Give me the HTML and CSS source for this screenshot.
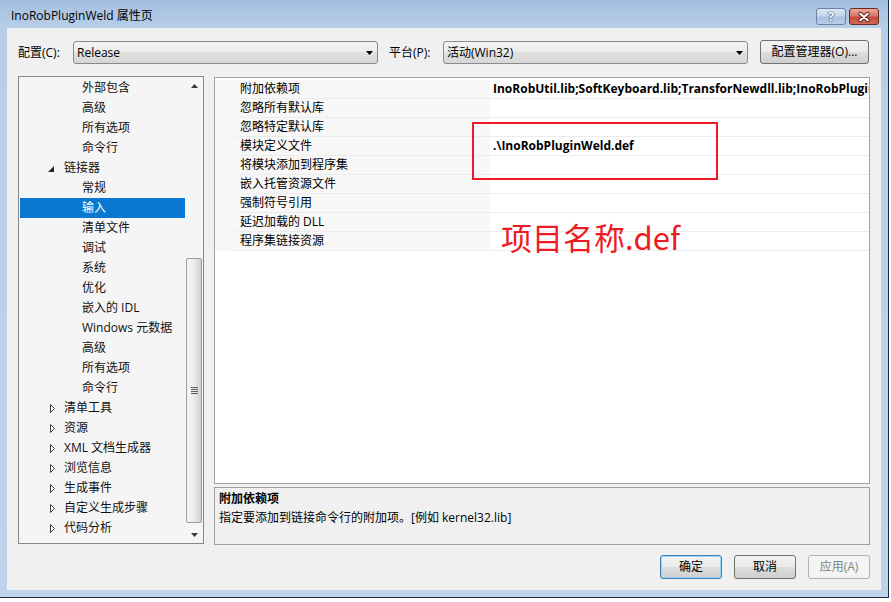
FILE: index.html
```html
<!DOCTYPE html>
<html lang="zh-CN">
<head>
<meta charset="utf-8">
<title>InoRobPluginWeld 属性页</title>
<link rel="stylesheet" href="styles.css">
</head>
<body>
<div class="window">
  <div class="titlebar">
    <span class="title">InoRobPluginWeld 属性页</span>
    <div class="caption-btns">
      <div class="cap-btn help">?</div>
      <div class="cap-btn close">
        <svg width="30" height="16" viewBox="0 0 30 16"><path d="M11 4.5 L19 11.5 M19 4.5 L11 11.5" stroke="#5a1d19" stroke-width="4.2" stroke-linecap="round"/><path d="M11 4.5 L19 11.5 M19 4.5 L11 11.5" stroke="#ffffff" stroke-width="2.2" stroke-linecap="round"/></svg>
      </div>
    </div>
  </div>
  <div class="client">
    <div class="toprow">
      <span class="lbl lbl-config">配置(C):</span>
      <div class="combo"><span>Release</span><svg class="dd" width="7" height="4" viewBox="0 0 7 4"><polygon points="0,0 7,0 3.5,4" fill="#000"/></svg></div>
      <span class="lbl lbl-platform">平台(P):</span>
      <div class="combo"><span>活动(Win32)</span><svg class="dd" width="7" height="4" viewBox="0 0 7 4"><polygon points="0,0 7,0 3.5,4" fill="#000"/></svg></div>
      <button class="btn btn-manager">配置管理器(O)...</button>
    </div>
    <div class="main">
      <div class="tree">
        <div class="tree-list">
          <div class="trow l2">外部包含</div>
          <div class="trow l2">高级</div>
          <div class="trow l2">所有选项</div>
          <div class="trow l2">命令行</div>
          <div class="trow l1"><span class="tarrow"><svg width="6" height="6" viewBox="0 0 6 6"><polygon points="6,0 6,6 0,6" fill="#262626"/></svg></span>链接器</div>
          <div class="trow l2">常规</div>
          <div class="trow l2 sel">输入</div>
          <div class="trow l2">清单文件</div>
          <div class="trow l2">调试</div>
          <div class="trow l2">系统</div>
          <div class="trow l2">优化</div>
          <div class="trow l2">嵌入的 IDL</div>
          <div class="trow l2">Windows 元数据</div>
          <div class="trow l2">高级</div>
          <div class="trow l2">所有选项</div>
          <div class="trow l2">命令行</div>
          <div class="trow l1"><span class="tarrow c"><svg width="6" height="9" viewBox="0 0 6 9"><polygon points="0.5,0.5 4.5,4.5 0.5,8.5" fill="#fff" stroke="#3c3c3c" stroke-width="1"/></svg></span>清单工具</div>
          <div class="trow l1"><span class="tarrow c"><svg width="6" height="9" viewBox="0 0 6 9"><polygon points="0.5,0.5 4.5,4.5 0.5,8.5" fill="#fff" stroke="#3c3c3c" stroke-width="1"/></svg></span>资源</div>
          <div class="trow l1"><span class="tarrow c"><svg width="6" height="9" viewBox="0 0 6 9"><polygon points="0.5,0.5 4.5,4.5 0.5,8.5" fill="#fff" stroke="#3c3c3c" stroke-width="1"/></svg></span>XML 文档生成器</div>
          <div class="trow l1"><span class="tarrow c"><svg width="6" height="9" viewBox="0 0 6 9"><polygon points="0.5,0.5 4.5,4.5 0.5,8.5" fill="#fff" stroke="#3c3c3c" stroke-width="1"/></svg></span>浏览信息</div>
          <div class="trow l1"><span class="tarrow c"><svg width="6" height="9" viewBox="0 0 6 9"><polygon points="0.5,0.5 4.5,4.5 0.5,8.5" fill="#fff" stroke="#3c3c3c" stroke-width="1"/></svg></span>生成事件</div>
          <div class="trow l1"><span class="tarrow c"><svg width="6" height="9" viewBox="0 0 6 9"><polygon points="0.5,0.5 4.5,4.5 0.5,8.5" fill="#fff" stroke="#3c3c3c" stroke-width="1"/></svg></span>自定义生成步骤</div>
          <div class="trow l1"><span class="tarrow c"><svg width="6" height="9" viewBox="0 0 6 9"><polygon points="0.5,0.5 4.5,4.5 0.5,8.5" fill="#fff" stroke="#3c3c3c" stroke-width="1"/></svg></span>代码分析</div>
        </div>
        <div class="vscroll">
          <div class="sarrow"><svg width="7" height="4" viewBox="0 0 7 4"><polygon points="0,4 3.5,0 7,4" fill="#3a3a3a"/></svg></div>
          <div class="strack">
            <div class="thumb">
              <svg width="7" height="7" viewBox="0 0 7 7"><path d="M0 0.5H7M0 2.5H7M0 4.5H7M0 6.5H7" stroke="#5e5e5e" stroke-width="1"/></svg>
            </div>
          </div>
          <div class="sarrow"><svg width="7" height="4" viewBox="0 0 7 4"><polygon points="0,0 7,0 3.5,4" fill="#3a3a3a"/></svg></div>
        </div>
      </div>
      <div class="rightcol">
        <div class="grid">
          <div class="grow"><div class="gmargin"></div><div class="gname">附加依赖项</div><div class="gval">InoRobUtil.lib;SoftKeyboard.lib;TransforNewdll.lib;InoRobPluginWeld.lib;%(AdditionalDependencies)</div></div>
          <div class="grow"><div class="gmargin"></div><div class="gname">忽略所有默认库</div><div class="gval"></div></div>
          <div class="grow"><div class="gmargin"></div><div class="gname">忽略特定默认库</div><div class="gval"></div></div>
          <div class="grow"><div class="gmargin"></div><div class="gname">模块定义文件</div><div class="gval">.\InoRobPluginWeld.def</div></div>
          <div class="grow"><div class="gmargin"></div><div class="gname">将模块添加到程序集</div><div class="gval"></div></div>
          <div class="grow"><div class="gmargin"></div><div class="gname">嵌入托管资源文件</div><div class="gval"></div></div>
          <div class="grow"><div class="gmargin"></div><div class="gname">强制符号引用</div><div class="gval"></div></div>
          <div class="grow"><div class="gmargin"></div><div class="gname">延迟加载的 DLL</div><div class="gval"></div></div>
          <div class="grow"><div class="gmargin"></div><div class="gname">程序集链接资源</div><div class="gval"></div></div>
          <div class="annot-box"></div>
          <div class="annot-text">项目名称.def</div>
        </div>
        <div class="desc">
          <div class="desc-title">附加依赖项</div>
          <div class="desc-text">指定要添加到链接命令行的附加项。[例如 kernel32.lib]</div>
        </div>
      </div>
    </div>
    <div class="btnrow">
      <button class="btn dlg default">确定</button>
      <button class="btn dlg">取消</button>
      <button class="btn dlg disabled">应用(A)</button>
    </div>
  </div>
</div>
</body>
</html>
```
FILE: styles.css
```css
* { box-sizing: border-box; }
html, body { margin: 0; padding: 0; }
body {
  width: 891px;
  height: 602px;
  overflow: hidden;
  background: #ffffff;
  font-family: "Open Sans", "Noto Sans CJK SC", sans-serif;
  font-size: 12px;
  color: #000;
}
.window {
  width: 889px;
  height: 598px;
  border-right: 1px solid #1c2b3c;
  border-bottom: 1px solid #1c2b3c;
  background: linear-gradient(180deg, #a3bfdf 0px, #b8cee8 28px, #bfd4eb 100%);
  display: flex;
  flex-direction: column;
  padding: 0 7px 7px 7px;
}
.titlebar {
  height: 28px;
  flex: none;
  display: flex;
  justify-content: space-between;
  padding-left: 4px;
  padding-right: 2px;
}
.title {
  margin-top: 7px;
  line-height: 18px;
  color: #000;
}
.caption-btns {
  display: flex;
  gap: 3px;
  margin-top: 8px;
}
.cap-btn {
  width: 30px;
  height: 17px;
  border-radius: 3px;
}
.help {
  border: 1px solid #6a83a6;
  background: linear-gradient(180deg, #dbe7f4 0%, #c3d5ea 45%, #a9c2df 55%, #b8cde6 100%);
  color: #fff;
  font-weight: 700;
  font-size: 13px;
  line-height: 14px;
  text-align: center;
  text-shadow: 0 0 1px #2b415f, 0 0 1px #2b415f, 0 0 1px #2b415f;
}
.close {
  border: 1px solid #6c2a25;
  background: linear-gradient(180deg, #e9a699 0%, #d77868 45%, #c54a3a 55%, #d26a55 100%);
  display: flex;
  align-items: center;
  justify-content: center;
}
.close svg { display: block; }
.client {
  height: 562px;
  flex: none;
  background: #f0f0f0;
  padding: 12px 11px 0 11px;
  display: flex;
  flex-direction: column;
}
.toprow {
  display: flex;
  align-items: flex-start;
  height: 24px;
}
.lbl {
  margin-top: 1px;
  line-height: 23px;
  white-space: nowrap;
}
.lbl-config { width: 55px; }
.lbl-platform { width: 54px; margin-left: 11px; }
.combo {
  margin-top: 1px;
  width: 305px;
  height: 23px;
  border: 1px solid #8a8a8a;
  border-radius: 3px;
  background: linear-gradient(180deg, #f3f3f3 0%, #ececec 50%, #e1e1e1 50%, #d6d6d6 100%);
  display: flex;
  align-items: center;
  justify-content: space-between;
  padding: 0 4px 0 3px;
  line-height: 21px;
}
.dd { display: block; margin-top: 1px; }
.btn {
  font-family: "Open Sans", "Noto Sans CJK SC", sans-serif;
  font-size: 12px;
  color: #000;
  padding: 0;
  border: 1px solid #707070;
  border-radius: 3px;
  background: linear-gradient(180deg, #f2f2f2 0%, #ebebeb 50%, #dddddd 50%, #cfcfcf 100%);
  height: 24px;
  line-height: 20px;
}
.btn-manager {
  width: 109px;
  margin-left: 12px;
}
.main {
  margin-top: 12px;
  height: 469px;
  display: flex;
  gap: 10px;
}
.tree {
  width: 186px;
  height: 468px;
  border: 1px solid #828790;
  background: #f5f5f5;
  display: flex;
}
.tree-list {
  flex: 1;
  padding: 1px 1px 0 1px;
  overflow: hidden;
}
.trow {
  height: 20px;
  line-height: 20px;
  white-space: nowrap;
  display: flex;
  align-items: center;
  color: #111;
}
.trow.l2 { padding-left: 62px; }
.trow.l1 { padding-left: 28px; }
.trow.sel { background: #0a78d0; color: #fff; }
.tarrow {
  width: 16px;
  display: flex;
  align-items: center;
  height: 20px;
  padding-top: 1px;
}
.tarrow.c { padding-left: 2px; padding-top: 1px; }
.tarrow svg { display: block; }
.vscroll {
  width: 17px;
  display: flex;
  flex-direction: column;
}
.sarrow {
  height: 17px;
  display: flex;
  align-items: center;
  justify-content: center;
  padding-right: 1px;
}
.sarrow svg { display: block; }
.strack {
  flex: 1;
  padding-top: 164px;
}
.thumb {
  width: 16px;
  height: 265px;
  border: 1px solid #9c9c9c;
  border-radius: 2px;
  background: linear-gradient(90deg, #f4f4f4 0%, #ececec 45%, #dcdcdc 80%, #cfcfcf 100%);
  display: flex;
  align-items: center;
  justify-content: center;
}
.thumb svg { display: block; }
.rightcol {
  width: 656px;
  display: flex;
  flex-direction: column;
}
.grid {
  position: relative;
  margin-top: 1px;
  height: 407px;
  border: 1px solid #a0a0a0;
  background: #fff;
  padding-top: 2px;
}
.grow {
  display: flex;
  height: 19px;
}
.gmargin {
  width: 21px;
  background: #f7f7f7;
}
.gname {
  width: 254px;
  padding-left: 4px;
  line-height: 18px;
  background: #f7f7f7;
  border-bottom: 1px solid #ececec;
  white-space: nowrap;
}
.gval {
  flex: 1;
  padding-left: 3px;
  line-height: 18px;
  font-weight: 700;
  border-bottom: 1px solid #ececec;
  white-space: nowrap;
  overflow: hidden;
}
.annot-box {
  position: absolute;
  left: 257px;
  top: 44px;
  width: 246px;
  height: 58px;
  border: 2px solid #ed1c24;
}
.annot-text {
  position: absolute;
  left: 286px;
  top: 143px;
  font-family: "Noto Sans CJK SC", sans-serif;
  font-size: 31px;
  line-height: 31px;
  color: #ed1c24;
  white-space: nowrap;
}
.desc {
  margin-top: 3px;
  height: 58px;
  border: 1px solid #a0a0a0;
  background: #f0f0f0;
  padding: 1px 4px 0 4px;
  line-height: 19px;
}
.desc-title { font-weight: 700; }
.btnrow {
  margin-top: 10px;
  display: flex;
  justify-content: flex-end;
  gap: 12px;
}
.btn.dlg { width: 62px; }
.btn.default {
  border-color: #3c7fb1;
  box-shadow: inset 0 0 0 1px #9ad9f7;
}
.btn.disabled {
  border-color: #adb2b5;
  background: #f4f4f4;
  color: #838383;
}
```
